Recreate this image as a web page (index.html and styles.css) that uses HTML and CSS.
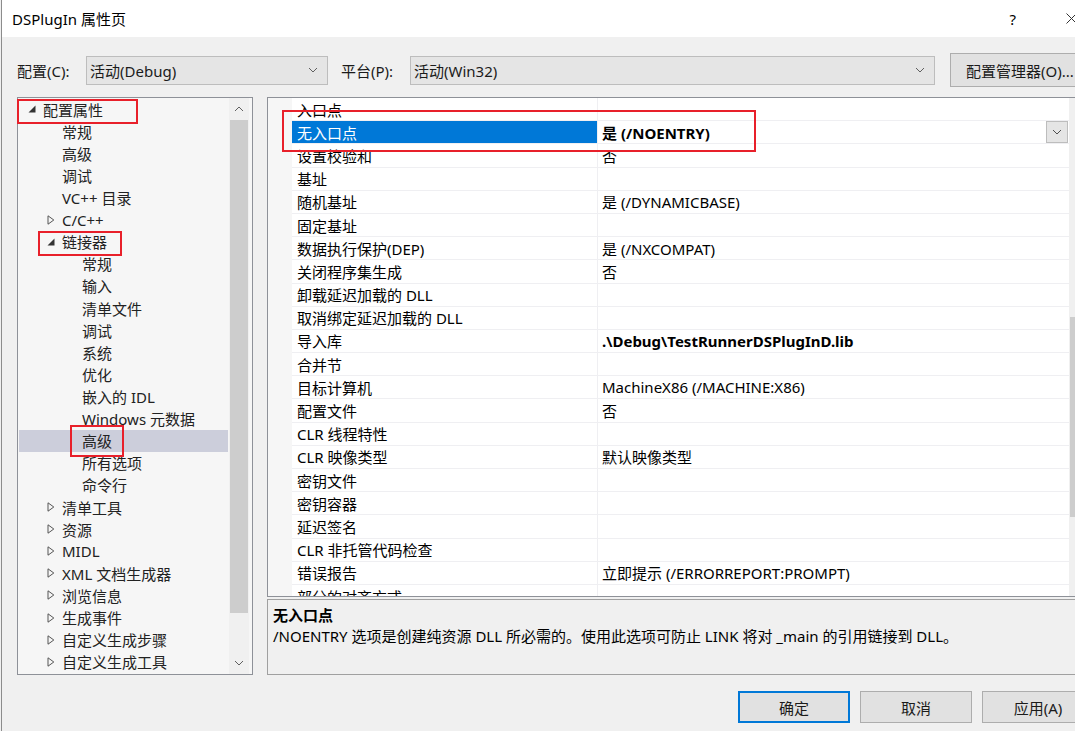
FILE: index.html
```html
<!DOCTYPE html>
<html lang="zh-CN">
<head>
  <meta charset="UTF-8">
  <title>DSPlugIn 属性页</title>
  <link rel="stylesheet" href="styles.css">
</head>
<body>
  <div class="window">
    <div class="titlebar">
      <span class="title">DSPlugIn 属性页</span>
      <span class="help">?</span>
      <svg class="close" width="11" height="11" viewBox="0 0 11 11"><path d="M0.5 0.5L10.5 10.5M10.5 0.5L0.5 10.5" stroke="#333" fill="none"/></svg>
    </div>

    <div class="config-row">
      <span class="label">配置(C):</span>
      <div class="combo combo-config">
        <span class="combo-text">活动(Debug)</span>
        <svg class="chev" width="10" height="6" viewBox="0 0 10 6"><path d="M1 1L5 5L9 1" stroke="#606060" fill="none"/></svg>
      </div>
      <span class="label label-platform">平台(P):</span>
      <div class="combo combo-platform">
        <span class="combo-text">活动(Win32)</span>
        <svg class="chev" width="10" height="6" viewBox="0 0 10 6"><path d="M1 1L5 5L9 1" stroke="#606060" fill="none"/></svg>
      </div>
      <button class="btn btn-manager">配置管理器(O)...</button>
    </div>

    <div class="panels">
      <div class="tree">
        <div class="tree-list">
          <div class="node lv0"><svg class="arrow" viewBox="0 0 8 10"><path d="M7.5 1.5V8.5H0.5Z" fill="#333"/></svg><span>配置属性</span></div>
          <div class="node lv1"><i class="arrow"></i><span>常规</span></div>
          <div class="node lv1"><i class="arrow"></i><span>高级</span></div>
          <div class="node lv1"><i class="arrow"></i><span>调试</span></div>
          <div class="node lv1"><i class="arrow"></i><span>VC++ 目录</span></div>
          <div class="node lv1"><svg class="arrow" viewBox="0 0 8 10"><path d="M1 0.8L6.8 5L1 9.2Z" fill="none" stroke="#555"/></svg><span>C/C++</span></div>
          <div class="node lv1"><svg class="arrow" viewBox="0 0 8 10"><path d="M7.5 1.5V8.5H0.5Z" fill="#333"/></svg><span>链接器</span></div>
          <div class="node lv2"><i class="arrow"></i><span>常规</span></div>
          <div class="node lv2"><i class="arrow"></i><span>输入</span></div>
          <div class="node lv2"><i class="arrow"></i><span>清单文件</span></div>
          <div class="node lv2"><i class="arrow"></i><span>调试</span></div>
          <div class="node lv2"><i class="arrow"></i><span>系统</span></div>
          <div class="node lv2"><i class="arrow"></i><span>优化</span></div>
          <div class="node lv2"><i class="arrow"></i><span>嵌入的 IDL</span></div>
          <div class="node lv2"><i class="arrow"></i><span>Windows 元数据</span></div>
          <div class="node lv2 selected"><i class="arrow"></i><span>高级</span></div>
          <div class="node lv2"><i class="arrow"></i><span>所有选项</span></div>
          <div class="node lv2"><i class="arrow"></i><span>命令行</span></div>
          <div class="node lv1"><svg class="arrow" viewBox="0 0 8 10"><path d="M1 0.8L6.8 5L1 9.2Z" fill="none" stroke="#555"/></svg><span>清单工具</span></div>
          <div class="node lv1"><svg class="arrow" viewBox="0 0 8 10"><path d="M1 0.8L6.8 5L1 9.2Z" fill="none" stroke="#555"/></svg><span>资源</span></div>
          <div class="node lv1"><svg class="arrow" viewBox="0 0 8 10"><path d="M1 0.8L6.8 5L1 9.2Z" fill="none" stroke="#555"/></svg><span>MIDL</span></div>
          <div class="node lv1"><svg class="arrow" viewBox="0 0 8 10"><path d="M1 0.8L6.8 5L1 9.2Z" fill="none" stroke="#555"/></svg><span>XML 文档生成器</span></div>
          <div class="node lv1"><svg class="arrow" viewBox="0 0 8 10"><path d="M1 0.8L6.8 5L1 9.2Z" fill="none" stroke="#555"/></svg><span>浏览信息</span></div>
          <div class="node lv1"><svg class="arrow" viewBox="0 0 8 10"><path d="M1 0.8L6.8 5L1 9.2Z" fill="none" stroke="#555"/></svg><span>生成事件</span></div>
          <div class="node lv1"><svg class="arrow" viewBox="0 0 8 10"><path d="M1 0.8L6.8 5L1 9.2Z" fill="none" stroke="#555"/></svg><span>自定义生成步骤</span></div>
          <div class="node lv1"><svg class="arrow" viewBox="0 0 8 10"><path d="M1 0.8L6.8 5L1 9.2Z" fill="none" stroke="#555"/></svg><span>自定义生成工具</span></div>
        </div>
        <div class="tree-scroll">
          <div class="sb-btn"><svg width="10" height="6" viewBox="0 0 10 6"><path d="M1 5L5 1L9 5" stroke="#606060" fill="none"/></svg></div>
          <div class="sb-thumb"></div>
          <div class="sb-fill"></div>
          <div class="sb-btn"><svg width="10" height="6" viewBox="0 0 10 6"><path d="M1 1L5 5L9 1" stroke="#606060" fill="none"/></svg></div>
        </div>
        <div class="mark mark-root"></div>
        <div class="mark mark-linker"></div>
        <div class="mark mark-advanced"></div>
      </div>

      <div class="right">
        <div class="grid">
          <div class="gutter"></div>
          <div class="props">
            <div class="prop"><div class="name">入口点</div><div class="value"></div></div>
            <div class="prop active"><div class="name">无入口点</div><div class="value"><b>是 (/NOENTRY)</b><span class="drop"><svg width="10" height="6" viewBox="0 0 10 6"><path d="M1 1L5 5L9 1" stroke="#505050" fill="none"/></svg></span></div></div>
            <div class="prop"><div class="name">设置校验和</div><div class="value">否</div></div>
            <div class="prop"><div class="name">基址</div><div class="value"></div></div>
            <div class="prop"><div class="name">随机基址</div><div class="value">是 (/DYNAMICBASE)</div></div>
            <div class="prop"><div class="name">固定基址</div><div class="value"></div></div>
            <div class="prop"><div class="name">数据执行保护(DEP)</div><div class="value">是 (/NXCOMPAT)</div></div>
            <div class="prop"><div class="name">关闭程序集生成</div><div class="value">否</div></div>
            <div class="prop"><div class="name">卸载延迟加载的 DLL</div><div class="value"></div></div>
            <div class="prop"><div class="name">取消绑定延迟加载的 DLL</div><div class="value"></div></div>
            <div class="prop"><div class="name">导入库</div><div class="value"><b>.\Debug\TestRunnerDSPlugInD.lib</b></div></div>
            <div class="prop"><div class="name">合并节</div><div class="value"></div></div>
            <div class="prop"><div class="name">目标计算机</div><div class="value">MachineX86 (/MACHINE:X86)</div></div>
            <div class="prop"><div class="name">配置文件</div><div class="value">否</div></div>
            <div class="prop"><div class="name">CLR 线程特性</div><div class="value"></div></div>
            <div class="prop"><div class="name">CLR 映像类型</div><div class="value">默认映像类型</div></div>
            <div class="prop"><div class="name">密钥文件</div><div class="value"></div></div>
            <div class="prop"><div class="name">密钥容器</div><div class="value"></div></div>
            <div class="prop"><div class="name">延迟签名</div><div class="value"></div></div>
            <div class="prop"><div class="name">CLR 非托管代码检查</div><div class="value"></div></div>
            <div class="prop"><div class="name">错误报告</div><div class="value">立即提示 (/ERRORREPORT:PROMPT)</div></div>
            <div class="prop"><div class="name">部分的对齐方式</div><div class="value"></div></div>
          </div>
          <div class="grid-scroll"><div class="sb-thumb"></div></div>
          <div class="mark mark-prop"></div>
        </div>
        <div class="desc">
          <div class="desc-title">无入口点</div>
          <div class="desc-text">/NOENTRY 选项是创建纯资源 DLL 所必需的。使用此选项可防止 LINK 将对 _main 的引用链接到 DLL。</div>
        </div>
      </div>
    </div>

    <div class="footer">
      <button class="btn btn-default">确定</button>
      <button class="btn">取消</button>
      <button class="btn">应用(A)</button>
    </div>
  </div>
</body>
</html>
```

FILE: styles.css
```css
* {
  box-sizing: border-box;
}

body {
  margin: 0;
  background-color: #f0f0f0;
  font-family: "Noto Sans", "Noto Sans CJK SC", sans-serif;
  font-size: 15px;
  color: #1b1b1b;
  overflow: hidden;
}

.window {
  width: 1100px;
  height: 731px;
  margin-left: 1px;
  border-left: 1px solid #8c8c8c;
  background-color: #f0f0f0;
}

.titlebar {
  height: 37px;
  background-color: white;
  display: flex;
  align-items: center;
  padding: 0 24px 0 10px;
  color: #000;
}

.title {
  flex: 1;
}

.help {
  margin-right: 50px;
}

.config-row {
  height: 60px;
  display: flex;
  align-items: center;
  padding: 16px 0 10px 15px;
}

.label {
  width: 69px;
}

.label-platform {
  margin-left: 13px;
}

.combo {
  height: 29px;
  background-color: #e5e5e5;
  border: 1px solid #bdbdbd;
  display: flex;
  align-items: center;
  padding: 0 9px 0 3px;
}

.combo-text {
  flex: 1;
}

.combo-config {
  width: 242px;
}

.combo-platform {
  width: 525px;
}

.btn {
  font-family: inherit;
  font-size: 15px;
  color: #1b1b1b;
  background-color: #e1e1e1;
  border: 1px solid #adadad;
  padding: 0;
}

.btn-manager {
  margin-left: 15px;
  width: 140px;
  height: 34px;
  text-align: left;
  padding-left: 15px;
}

.panels {
  height: 578px;
  display: flex;
  gap: 14px;
  padding-left: 15px;
}

/* tree */
.tree {
  width: 236px;
  border: 1px solid #8e9198;
  background-color: #f6f6f6;
  display: flex;
  position: relative;
}

.tree-list {
  width: 211px;
  padding: 0 1px;
}

.node {
  height: 22.12px;
  display: flex;
  align-items: center;
  white-space: nowrap;
  color: #222;
}

.node.lv0 { padding-left: 9px; }
.node.lv1 { padding-left: 28px; }
.node.lv2 { padding-left: 48px; }

.node.selected {
  background-color: #cccedb;
}

.arrow {
  width: 15px;
  height: 10px;
  flex: none;
  padding-right: 7px;
}

.tree-scroll {
  width: 20px;
  display: flex;
  flex-direction: column;
  background-color: #f0f0f0;
}

.sb-btn {
  height: 22px;
  display: flex;
  align-items: center;
  justify-content: center;
}

.tree-scroll .sb-thumb {
  height: 493px;
  margin: 0 1px;
  background-color: #cdcdcd;
}

.sb-fill {
  flex: 1;
}

.mark {
  position: absolute;
  border: 2px solid #e8202a;
}

.mark-root { left: -1px; top: 1px; width: 121px; height: 25px; }
.mark-linker { left: 20px; top: 133px; width: 84px; height: 25px; }
.mark-advanced { left: 52px; top: 327px; width: 54px; height: 32px; }
.mark-prop { left: 14px; top: 12px; width: 474px; height: 42px; }

/* property grid */
.right {
  width: 820px;
  display: flex;
  flex-direction: column;
  gap: 2px;
}

.grid {
  height: 500px;
  border: 1px solid #8e9198;
  background-color: white;
  display: flex;
  position: relative;
}

.gutter {
  width: 24px;
  background-color: #f6f6f6;
}

.props {
  width: 777px;
  overflow: hidden;
}

.prop {
  height: 23.2px;
  display: grid;
  grid-template-columns: 306px 1fr;
  border-bottom: 1px solid #efeff2;
  color: #000;
}

.prop .name,
.prop .value {
  display: flex;
  align-items: center;
  white-space: nowrap;
  overflow: hidden;
}

.prop .name {
  padding-left: 5px;
  border-right: 1px solid #efeff2;
}

.prop .value {
  padding-left: 4px;
}

.prop .value b {
  flex: 1;
}

.prop.active .name {
  background-color: #0078d7;
  color: white;
}

.drop {
  width: 22px;
  height: 22px;
  margin-right: 1px;
  background-color: #e5e5e5;
  border: 1px solid #bdbdbd;
  display: flex;
  align-items: center;
  justify-content: center;
}

.grid-scroll {
  width: 17px;
  background-color: #f0f0f0;
  padding-top: 219px;
}

.grid-scroll .sb-thumb {
  height: 200px;
  margin: 0 1px;
  background-color: #cdcdcd;
}

/* description */
.desc {
  height: 76px;
  border: 1px solid #a0a0a0;
  border-right: none;
  background-color: #f0f0f0;
  padding: 5px 0 0 5px;
  line-height: 21px;
  color: #000;
}

.desc-title {
  font-weight: bold;
}

.footer {
  display: flex;
  gap: 10px;
  padding: 16px 0 0 736px;
}

.footer .btn {
  width: 112px;
  height: 32px;
}

.footer .btn-default {
  border: 2px solid #0078d7;
}
```
